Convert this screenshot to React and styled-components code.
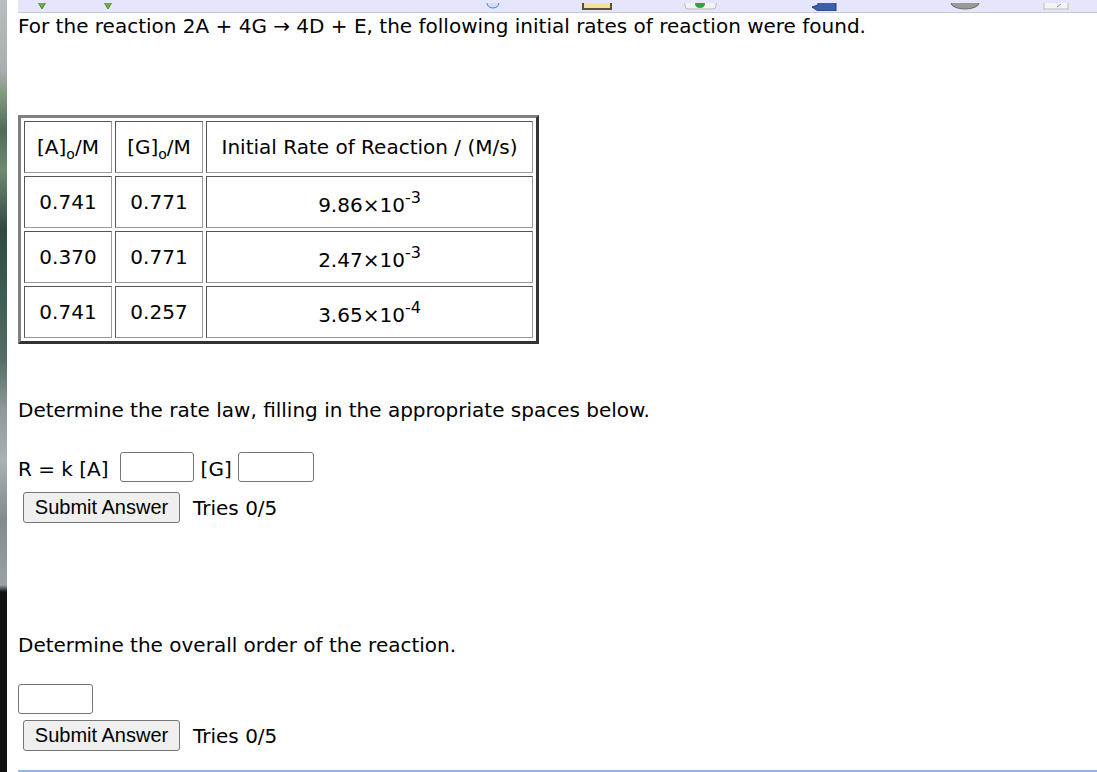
import React from "react";
import styled, { createGlobalStyle } from "styled-components";

const Global = createGlobalStyle`
  html, body {
    margin: 0;
    padding: 0;
    background: #fff;
    overflow: hidden;
  }
  body {
    font-family: "DejaVu Sans", Verdana, sans-serif;
    font-size: 20px;
    color: #000;
  }
`;

const Page = styled.div`
  display: flex;
  height: 772px;
`;

const SideStrip = styled.div`
  width: 7px;
  flex: none;
  background: linear-gradient(
    to bottom,
    #b9bdbf 0px,
    #a9aeae 70px,
    #7f9a7c 95px,
    #4f6b58 130px,
    #6d8a73 170px,
    #2f4a42 230px,
    #3f5e55 300px,
    #566d66 360px,
    #8d9a99 410px,
    #a9b1b1 460px,
    #7f8b8d 520px,
    #9aa3a4 585px,
    #111 592px,
    #111 100%
  );
`;

const Main = styled.div`
  flex: 1;
  margin-left: 11px;
  display: flex;
  flex-direction: column;
  min-width: 0;
`;

const Toolbar = styled.div`
  height: 12px;
  flex: none;
  background: #e5e5fb;
  border-bottom: 1px solid #c9c9d6;
  overflow: hidden;
  position: relative;
`;

const ToolIcon = styled.div`
  position: absolute;
  left: ${(p) => p.x}px;
  bottom: ${(p) => p.b}px;
  line-height: 0;
`;

const Content = styled.div`
  display: flex;
  flex-direction: column;
  align-items: flex-start;
`;

const Text = styled.p`
  margin: ${(p) => p.mt || 0}px 0 0 0;
  line-height: 20px;
  white-space: nowrap;
`;

const RateTable = styled.table`
  margin-top: 79px;
  border-collapse: separate;
  border-spacing: 3px;
  border-style: solid;
  border-width: 3px;
  border-color: #808080 #333 #333 #808080;
`;

const Cell = styled.td`
  border-style: solid;
  border-width: 1px;
  border-color: #555 #9a9a9a #9a9a9a #555;
  height: 52px;
  box-sizing: border-box;
  padding: 0 10px;
  text-align: center;
  vertical-align: middle;
  line-height: 20px;
  width: ${(p) => p.w}px;
`;

const Sub = styled.sub`
  font-size: 14px;
  line-height: 0;
`;

const Sup = styled.sup`
  font-size: 16px;
  vertical-align: 9px;
  line-height: 16px;
`;

const AnswerRow = styled.div`
  display: flex;
  align-items: flex-end;
  margin-top: ${(p) => p.mt || 0}px;
`;

const Label = styled.span`
  line-height: 20px;
  margin: 0 ${(p) => p.mr || 0}px 3px ${(p) => p.ml || 0}px;
`;

const Box = styled.input`
  width: ${(p) => p.w || 75}px;
  height: 30px;
  box-sizing: border-box;
  border: 1px solid #767676;
  border-radius: 3px;
  padding: 0;
  margin: 0;
  background: #fff;
`;

const SubmitRow = styled.div`
  display: flex;
  align-items: center;
  margin-top: ${(p) => p.mt || 0}px;
  margin-left: 5px;
`;

const SubmitButton = styled.button`
  font-family: "Liberation Sans", Arial, sans-serif;
  font-size: 20px;
  height: 31px;
  width: 157px;
  padding: 0;
  background: #efefef;
  color: #000;
  border: 1px solid #767676;
  border-radius: 3px;
`;

const Tries = styled.span`
  margin-left: 13px;
  line-height: 20px;
`;

const Rule = styled.div`
  margin-top: 19px;
  border-top: 2px solid #8cb6ea;
  align-self: stretch;
`;

function Arrow() {
  return (
    <svg width="18" height="8" viewBox="0 6 18 8">
      <path d="M2 0 L9 12 L16 0 Z" fill="#6fae3c" stroke="#4b8a22" strokeWidth="1" />
    </svg>
  );
}

function Toolbox() {
  return (
    <Toolbar>
      <ToolIcon x={15} b={1}><Arrow /></ToolIcon>
      <ToolIcon x={81} b={1}><Arrow /></ToolIcon>
      <ToolIcon x={468} b={3}>
        <svg width="14" height="6"><ellipse cx="7" cy="0" rx="6" ry="5" fill="#cfe0f6" stroke="#4a7fd0" /></svg>
      </ToolIcon>
      <ToolIcon x={564} b={1}>
        <svg width="30" height="8"><rect x="1" y="-6" width="28" height="12" fill="#f3e39a" stroke="#55513a" strokeWidth="2" /></svg>
      </ToolIcon>
      <ToolIcon x={666} b={1}>
        <svg width="33" height="8"><rect x="1" y="-6" width="31" height="12" rx="3" fill="#f2f2f2" stroke="#b8b8b8" /><ellipse cx="16" cy="1" rx="5" ry="4" fill="#3e9f3a" /></svg>
      </ToolIcon>
      <ToolIcon x={794} b={1}>
        <svg width="26" height="8"><path d="M0 4 L6 2 L6 -4 L24 -4 L24 8 L6 8 Z" fill="#3b5fa8" stroke="#223e80" /></svg>
      </ToolIcon>
      <ToolIcon x={932} b={1}>
        <svg width="30" height="8"><ellipse cx="15" cy="0" rx="14" ry="6" fill="#9a9a9a" stroke="#6b6b6b" /></svg>
      </ToolIcon>
      <ToolIcon x={1025} b={1}>
        <svg width="26" height="8"><rect x="1" y="-6" width="24" height="12" fill="#f4f4f4" stroke="#bdbdbd" /><path d="M14 4 L18 1" stroke="#5b8ad0" /></svg>
      </ToolIcon>
    </Toolbar>
  );
}

const rows = [
  { a: "0.741", g: "0.771", r: "9.86", e: "-3" },
  { a: "0.370", g: "0.771", r: "2.47", e: "-3" },
  { a: "0.741", g: "0.257", r: "3.65", e: "-4" },
];

export default function App() {
  return (
    <>
      <Global />
      <Page>
        <SideStrip />
        <Main>
          <Toolbox />
          <Content>
            <Text mt={3}>
              For the reaction 2A + 4G → 4D + E, the following initial rates of reaction were found.
            </Text>

            <RateTable>
              <tbody>
                <tr>
                  <Cell w={88}>[A]<Sub>o</Sub>/M</Cell>
                  <Cell w={88}>[G]<Sub>o</Sub>/M</Cell>
                  <Cell w={327}>Initial Rate of Reaction / (M/s)</Cell>
                </tr>
                {rows.map((row, i) => (
                  <tr key={i}>
                    <Cell>{row.a}</Cell>
                    <Cell>{row.g}</Cell>
                    <Cell>
                      {row.r}×10<Sup>{row.e}</Sup>
                    </Cell>
                  </tr>
                ))}
              </tbody>
            </RateTable>

            <Text mt={56}>Determine the rate law, filling in the appropriate spaces below.</Text>

            <AnswerRow mt={32}>
              <Label mr={11}>R = k [A]</Label>
              <Box type="text" w={74} />
              <Label ml={7} mr={6}>[G]</Label>
              <Box type="text" w={76} />
            </AnswerRow>
            <SubmitRow mt={10}>
              <SubmitButton>Submit Answer</SubmitButton>
              <Tries>Tries 0/5</Tries>
            </SubmitRow>

            <Text mt={112}>Determine the overall order of the reaction.</Text>

            <AnswerRow mt={29}>
              <Box type="text" w={75} />
            </AnswerRow>
            <SubmitRow mt={6}>
              <SubmitButton>Submit Answer</SubmitButton>
              <Tries>Tries 0/5</Tries>
            </SubmitRow>

            <Rule />
          </Content>
        </Main>
      </Page>
    </>
  );
}
